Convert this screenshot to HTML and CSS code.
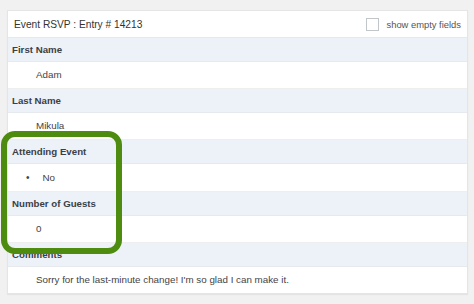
FILE: index.html
```html
<!DOCTYPE html>
<html>
<head>
<meta charset="utf-8">
<link rel="stylesheet" href="styles.css">
</head>
<body>
<div class="page">
  <div class="panel">
    <div class="head">
      <span class="title">Event RSVP : Entry # 14213</span>
      <label class="toggle"><span class="box"></span>show empty fields</label>
    </div>
    <div class="label">First Name</div>
    <div class="value">Adam</div>
    <div class="label">Last Name</div>
    <div class="value">Mikula</div>
    <div class="label">Attending Event</div>
    <div class="value list"><ul><li>No</li></ul></div>
    <div class="label">Number of Guests</div>
    <div class="value">0</div>
    <div class="label">Comments</div>
    <div class="value">Sorry for the last-minute change! I'm so glad I can make it.</div>
  </div>
  <div class="highlight"></div>
</div>
</body>
</html>
```
FILE: styles.css
```css
html, body {
  margin: 0;
  padding: 0;
  background: #f1f1f1;
  font-family: "Liberation Sans", Arial, sans-serif;
  color: #444;
}
.page {
  position: relative;
  padding: 10px 6px 0 7px;
  height: 304px;
  box-sizing: border-box;
}
.panel {
  background: #fff;
  border: 1px solid #e5e5e5;
  box-shadow: 0 1px 1px rgba(0,0,0,0.05);
}
.head {
  display: flex;
  align-items: center;
  justify-content: space-between;
  height: 26px;
  padding: 0 6px 0 6px;
  border-bottom: 1px solid #e8e8e8;
}
.title {
  font-size: 10.2px;
  color: #333;
}
.toggle {
  display: flex;
  align-items: center;
  font-size: 9.4px;
  color: #555;
}
.box {
  width: 11px;
  height: 11px;
  border: 1px solid #c3c6c9;
  background: #fff;
  margin-right: 7px;
}
.label {
  height: 23px;
  line-height: 23px;
  background: #edf1f8;
  border-bottom: 1px solid #e6e9ee;
  padding-left: 4px;
  font-size: 9.7px;
  font-weight: bold;
  color: #3c4044;
}
.value {
  height: 26px;
  line-height: 26px;
  border-bottom: 1px solid #eeeeee;
  padding-left: 28px;
  font-size: 9.8px;
  color: #444;
}
.value.list {
  height: 27px;
  line-height: 27px;
  padding-left: 0;
}
.value ul {
  margin: 0;
  padding-left: 18px;
  list-style: none;
}
.value li::before {
  content: "\2022";
  margin-right: 13px;
  font-size: 10px;
}
.value:last-child {
  border-bottom: none;
}
.highlight {
  position: absolute;
  left: 1px;
  top: 131px;
  width: 109px;
  height: 111px;
  border: 6px solid #4d8c0f;
  border-radius: 14px;
}
```
